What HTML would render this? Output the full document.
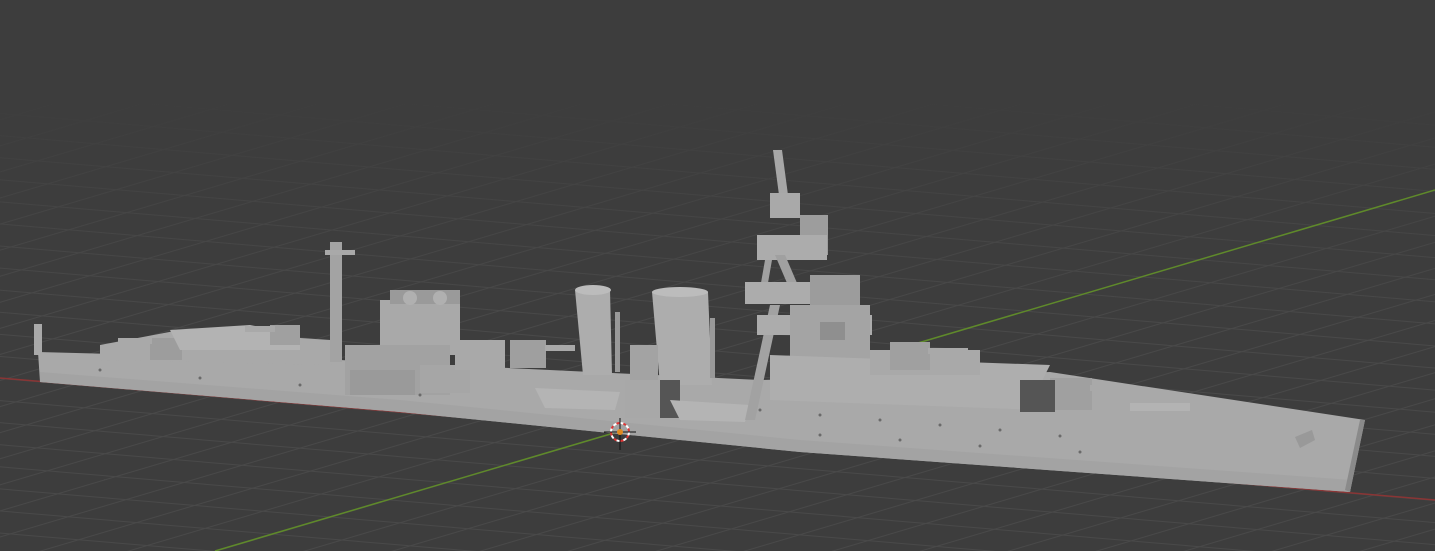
<!DOCTYPE html>
<html><head><style>
html,body{margin:0;padding:0;background:#3d3d3d;width:1435px;height:551px;overflow:hidden}
svg{display:block}
</style></head><body>
<svg width="1435" height="551" viewBox="0 0 1435 551" xmlns="http://www.w3.org/2000/svg">
<defs>
<pattern id="pr" width="200" height="22" patternUnits="userSpaceOnUse" patternTransform="translate(0,378) rotate(4.86)">
<rect x="0" y="0" width="200" height="1" fill="#494949"/>
</pattern>
<pattern id="pg" width="200" height="25" patternUnits="userSpaceOnUse" patternTransform="translate(215,551) rotate(-16.5)">
<rect x="0" y="0" width="200" height="1" fill="#494949"/>
</pattern>
<linearGradient id="fade" x1="0" y1="0" x2="0" y2="1">
<stop offset="0" stop-color="#3d3d3d" stop-opacity="1"/>
<stop offset="0.18" stop-color="#3d3d3d" stop-opacity="1"/>
<stop offset="0.4" stop-color="#3d3d3d" stop-opacity="0.3"/>
<stop offset="0.6" stop-color="#3d3d3d" stop-opacity="0"/>
</linearGradient>
</defs>
<rect width="1435" height="551" fill="#3d3d3d"/>
<rect width="1435" height="551" fill="url(#pr)"/>
<rect width="1435" height="551" fill="url(#pg)"/>
<rect width="1435" height="551" fill="url(#fade)"/>
<line x1="215" y1="551" x2="1435" y2="190" stroke="#5f8a2a" stroke-width="1.5"/>
<line x1="0" y1="378" x2="1435" y2="500" stroke="#8a3535" stroke-width="1.5"/>
<g fill="#a9a9a9" stroke="none">
<polygon points="38,352 340,360 760,380 1050,372 1365,420 1350,492 800,452 400,412 40,382"/>
<polygon points="40,382 400,412 800,452 1350,492 1352,480 800,440 400,400 40,372" fill="#a3a3a3"/>
<polygon points="1360,420 1365,420 1350,492 1345,490" fill="#8a8a8a"/>
<rect x="34" y="324" width="8" height="31"/>
<polygon points="100,345 180,330 330,340 335,365 100,360"/>
<rect x="150" y="338" width="32" height="22" fill="#9d9d9d"/>
<rect x="118" y="338" width="34" height="6"/>
<polygon points="170,330 250,325 300,335 300,350 180,350" fill="#b3b3b3"/>
<rect x="270" y="325" width="30" height="20" fill="#a0a0a0"/>
<rect x="245" y="326" width="30" height="6"/>
<rect x="330" y="242" width="12" height="120" fill="#a3a3a3"/>
<rect x="325" y="250" width="30" height="5"/>
<rect x="380" y="300" width="80" height="55"/>
<rect x="390" y="290" width="70" height="14" fill="#9a9a9a"/>
<circle cx="410" cy="298" r="7" fill="#b0b0b0"/><circle cx="440" cy="298" r="7" fill="#b0b0b0"/>
<rect x="345" y="345" width="105" height="50" fill="#a2a2a2"/>
<rect x="350" y="370" width="65" height="25" fill="#9a9a9a"/>
<rect x="420" y="365" width="50" height="28" fill="#a6a6a6"/>
<rect x="455" y="340" width="50" height="30"/>
<rect x="510" y="340" width="36" height="28" fill="#9f9f9f"/>
<rect x="545" y="345" width="30" height="6"/>
<polygon points="575,290 610,290 612,375 583,375" fill="#adadad"/>
<ellipse cx="593" cy="290" rx="18" ry="5" fill="#bcbcbc"/>
<polygon points="652,292 708,292 712,385 660,385" fill="#adadad"/>
<ellipse cx="680" cy="292" rx="28" ry="5" fill="#bcbcbc"/>
<rect x="615" y="312" width="5" height="60" fill="#999"/>
<rect x="710" y="318" width="5" height="60" fill="#999"/>
<rect x="630" y="345" width="28" height="35" fill="#a3a3a3"/>
<polygon points="535,388 620,392 615,410 545,408" fill="#b4b4b4"/>
<rect x="625" y="380" width="55" height="38" fill="#a8a8a8"/>
<rect x="660" y="380" width="20" height="38" fill="#555"/>
<polygon points="670,400 750,405 745,422 680,420" fill="#b4b4b4"/>
<polygon points="770,305 780,305 755,420 745,420" fill="#a2a2a2"/>
<polygon points="773,150 782,150 788,195 779,195" fill="#a7a7a7"/>
<rect x="770" y="193" width="30" height="25"/>
<rect x="800" y="215" width="28" height="40" fill="#9d9d9d"/>
<rect x="757" y="235" width="70" height="25" fill="#acacac"/>
<polygon points="775,255 785,255 800,290 790,290" fill="#a0a0a0"/>
<polygon points="765,260 772,260 765,300 758,300" fill="#a0a0a0"/>
<rect x="745" y="282" width="115" height="22" fill="#acacac"/>
<rect x="810" y="275" width="50" height="30" fill="#9c9c9c"/>
<rect x="757" y="315" width="115" height="20" fill="#acacac"/>
<rect x="790" y="305" width="80" height="60" fill="#a4a4a4"/>
<rect x="820" y="322" width="25" height="18" fill="#8f8f8f"/>
<polygon points="770,355 1050,365 1040,385 1040,410 770,400" fill="#aeaeae"/>
<rect x="870" y="350" width="110" height="25"/>
<rect x="890" y="342" width="40" height="28" fill="#a0a0a0"/>
<rect x="928" y="348" width="40" height="6"/>
<rect x="1050" y="378" width="42" height="32" fill="#a0a0a0"/>
<rect x="1090" y="385" width="42" height="6"/>
<rect x="1020" y="380" width="35" height="32" fill="#555"/>
<rect x="1130" y="403" width="60" height="8" fill="#b3b3b3"/>
<polygon points="1295,437 1312,430 1315,440 1300,448" fill="#999"/>
</g>
<g fill="#6a6a6a">
<circle cx="760" cy="410" r="1.5"/><circle cx="820" cy="415" r="1.5"/><circle cx="880" cy="420" r="1.5"/>
<circle cx="940" cy="425" r="1.5"/><circle cx="1000" cy="430" r="1.5"/><circle cx="1060" cy="436" r="1.5"/>
<circle cx="820" cy="435" r="1.5"/><circle cx="900" cy="440" r="1.5"/><circle cx="980" cy="446" r="1.5"/>
<circle cx="1080" cy="452" r="1.5"/><circle cx="100" cy="370" r="1.5"/><circle cx="200" cy="378" r="1.5"/>
<circle cx="300" cy="385" r="1.5"/><circle cx="420" cy="395" r="1.5"/>
</g>
<g>
<circle cx="620" cy="432" r="9" fill="none" stroke="#fff" stroke-width="2" stroke-dasharray="4 3"/>
<circle cx="620" cy="432" r="9" fill="none" stroke="#d33" stroke-width="2" stroke-dasharray="3 4" stroke-dashoffset="3.5"/>
<line x1="620" y1="418" x2="620" y2="450" stroke="#111" stroke-width="1"/>
<line x1="604" y1="432" x2="636" y2="432" stroke="#111" stroke-width="1"/>
<circle cx="620" cy="432" r="3" fill="#e08a20"/>
</g>
</svg>
</body></html>
